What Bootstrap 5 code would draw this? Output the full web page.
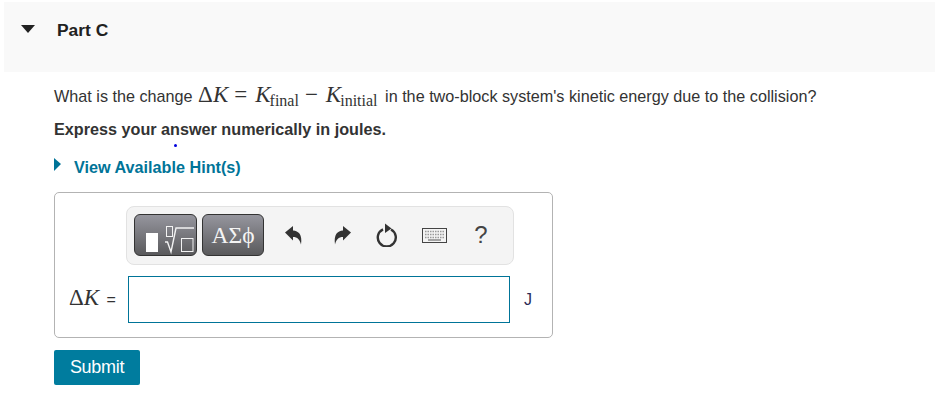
<!DOCTYPE html>
<html lang="en">
<head>
  <meta charset="UTF-8" />
  <meta name="viewport" content="width=device-width, initial-scale=1.0" />
  <title>Part C</title>
  <link href="https://cdn.jsdelivr.net/npm/bootstrap@5.3.0/dist/css/bootstrap.min.css" rel="stylesheet" />
  <style>
    body {
      font-family: "Liberation Sans", Arial, sans-serif;
      font-size: 16.2px;
      color: #333;
      background: #fff;
      padding-top: 2px;
    }
    .part-head {
      margin-left: 4px;
      height: 70px;
      background: #f9f9f9;
      padding: 18px 0 0 17px;
    }
    .part-head svg { margin-top: 5px; }
    .part-title { font-size: 17.4px; line-height: 20px; color: #212121; margin: 0 0 0 22px; font-weight: 700; }
    .part-body { padding: 12px 0 0 54px; }
    .mth { font-family: "Liberation Serif", "Times New Roman", serif; font-size: 23px; line-height: 0; color: #333; }
    .mth i { font-style: italic; }
    .mth sub { font-size: 16px; bottom: -.25em; line-height: 0; margin-left: -1px; }
    .mth-op { margin: 0 8px 0 6px; }
    .q-line { line-height: 24px; height: 24px; white-space: nowrap; }
    .q-line .mth { margin: 0 3px 0 1px; }
    .q-bold { font-weight: 700; margin-top: 9px; line-height: 24px; height: 24px; position: relative; }
    .blue-dot { position: absolute; left: 120px; top: 27px; width: 3px; height: 3px; border-radius: 50%; background: #00d; }
    .hint-row { margin-top: 14px; height: 24px; color: #007498; font-weight: 700; gap: 13px; }
    .hint-row svg { margin-bottom: 6px; }
    .answer-box {
      width: 499px;
      height: 146px;
      margin-top: 13px;
      border: 1px solid #b3b3b3;
      border-radius: 5px;
      padding: 13px 0 0 14px;
    }
    .tool-tray {
      width: 388px;
      height: 59px;
      margin-left: 57px;
      background: #f4f4f4;
      border: 1px solid #e2e2e2;
      border-radius: 8px;
      padding: 7px 0 0 7px;
    }
    .tpl-btn {
      height: 42px;
      border: 1px solid #333;
      border-radius: 6px;
      background: linear-gradient(#96969e, #5a5a5c);
      color: #fff;
      margin-right: 2px;
    }
    .tpl-btn svg { display: block; margin: -1px; }
    .tpl-a { width: 63px; margin-right: 5px; overflow: hidden; }
    .tpl-b { width: 62px; font-family: "Liberation Serif", serif; font-size: 23.5px; line-height: 40px; text-align: center; color: #f4f4f4; }
    .tool-ic { height: 42px; color: #333; }
    .w-undo { width: 54px; }
    .w-redo { width: 44px; }
    .w-reload { width: 46px; }
    .w-keys { width: 48px; }
    .w-help { width: 46px; font-size: 24px; color: #444; }
    .ans-row { margin-top: 11px; }
    .ans-label { width: 59px; font-size: 16px; white-space: nowrap; }
    .ans-label .mth { font-size: 23px; margin-right: 3px; }
    .ans-input {
      width: 382px;
      height: 47px;
      border: 1px solid #007498;
      border-radius: 0;
      padding: 0 8px;
    }
    .ans-input:focus { box-shadow: none; border-color: #007498; }
    .ans-unit { margin-left: 14px; font-size: 16px; color: #2b2b55; }
    .btn-send {
      display: block;
      margin-top: 12px;
      width: 86px;
      height: 35px;
      padding: 0;
      background: #007c9e;
      border: 0;
      border-radius: 2px;
      color: #fff;
      font-size: 18px;
      letter-spacing: -.3px;
    }
  </style>
</head>
<body>
<div class="part-head d-flex align-items-start">
  <svg width="14" height="8" viewBox="0 0 14 8" class="flex-shrink-0"><polygon points="0,0 14,0 7,8" fill="#222"/></svg>
  <h2 class="part-title">Part C</h2>
</div>

<div class="part-body">
  <div class="q-line">What is the change <span class="mth">Δ<i>K</i><span class="mth-op">=</span><i>K</i><sub>final</sub><span class="mth-op">−</span><i>K</i><sub>initial</sub></span> in the two-block system's kinetic energy due to the collision?</div>
  <div class="q-bold">Express your answer numerically in joules.<span class="blue-dot"></span></div>
  <div class="hint-row d-flex align-items-center">
    <svg width="7" height="13" viewBox="0 0 7 13" class="flex-shrink-0"><polygon points="0,0 7,6 0,13" fill="#007498"/></svg>
    <span>View Available Hint(s)</span>
  </div>

  <div class="answer-box">
    <div class="tool-tray d-flex">
      <div class="tpl-btn tpl-a">
        <svg width="63" height="42" viewBox="0 0 63 42">
          <rect x="12" y="19" width="12" height="19" fill="#fff"/>
          <rect x="32.5" y="12.5" width="6" height="10" fill="none" stroke="#f2f2f2"/>
          <path d="M31 28h2.500l3.500 10 5-24h18" fill="none" stroke="#f2f2f2" stroke-width="1.400"/>
          <rect x="47.500" y="24.500" width="11.500" height="13" fill="none" stroke="#f2f2f2"/>
        </svg>
      </div>
      <div class="tpl-btn tpl-b">ΑΣϕ</div>
      <div class="tool-ic w-undo d-flex align-items-center justify-content-center">
        <svg width="19" height="20" viewBox="0 0 19 20"><path d="M1 7.500L9 1v4.500c5.500.3 9.500 4 8 14-1.200-5-3.500-7.500-8-7.500v3.500z" fill="#333"/></svg>
      </div>
      <div class="tool-ic w-redo d-flex align-items-center justify-content-center">
        <svg width="19" height="20" viewBox="0 0 19 20"><path d="M18 7.500L10 1v4.500C4.500 5.800.5 9.500 2 19.500c1.200-5 3.500-7.500 8-7.500v3.500z" fill="#333"/></svg>
      </div>
      <div class="tool-ic w-reload d-flex align-items-center justify-content-center">
        <svg width="22" height="24" viewBox="0 0 22 24"><path d="M7 6.300a9 9 0 1 0 8 .2" fill="none" stroke="#333" stroke-width="2.400"/><polygon points="9,.5 15.500,5.500 9,10" fill="#333"/></svg>
      </div>
      <div class="tool-ic w-keys d-flex align-items-center justify-content-center">
        <svg width="25" height="15" viewBox="0 0 25 15"><rect x=".5" y=".5" width="24" height="14" fill="#f4f4f4" stroke="#444"/><path d="M3 3.500h19M3 6.500h19M3 9.500h19" stroke="#999" stroke-width="1.500" stroke-dasharray="1.500 1"/><path d="M6 12h13" stroke="#888" stroke-width="1.500"/></svg>
      </div>
      <div class="tool-ic w-help d-flex align-items-center justify-content-center">?</div>
    </div>
    <div class="ans-row d-flex align-items-center">
      <div class="ans-label"><span class="mth">Δ<i>K</i></span> =</div>
      <input type="text" class="form-control ans-input" aria-label="Delta K" />
      <span class="ans-unit">J</span>
    </div>
  </div>

  <button type="button" class="btn btn-send">Submit</button>
</div>
</body>
</html>
